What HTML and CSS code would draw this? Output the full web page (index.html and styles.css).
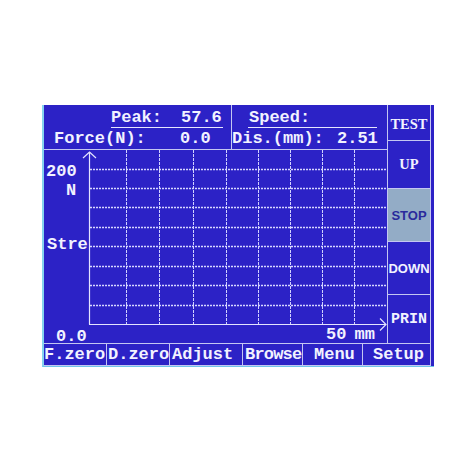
FILE: index.html
```
<!DOCTYPE html>
<html>
<head>
<meta charset="utf-8">
<link rel="stylesheet" href="styles.css">
</head>
<body>
<div class="screen">
  <div class="top">
    <div class="main">
      <div class="header">
        <div class="hcell hl">
          <div class="line1 pad-peak"><span class="ul ul-peak"><span class="k-peak">Peak:</span><span>57.6</span></span></div>
          <div class="line2 pad-force"><span class="k-force">Force(N):</span><span>0.0</span></div>
        </div>
        <div class="hcell hr">
          <div class="line1 pad-speed"><span class="ul ul-speed">Speed:</span></div>
          <div class="line2 pad-dis"><span class="k-dis">Dis.(mm):</span><span>2.51</span></div>
        </div>
      </div>
      <div class="graph">
        <div class="labels">
          <div class="lab l200">200</div>
          <div class="lab ln">N</div>
          <div class="lab lstre">Stre</div>
        </div>
        <div class="plot"><svg class="chart" width="298" height="174" viewBox="0 0 298 174"><g class="vgrid"><line x1="37.5" y1="0" x2="37.5" y2="174"/><line x1="70.5" y1="0" x2="70.5" y2="174"/><line x1="104.5" y1="0" x2="104.5" y2="174"/><line x1="137.5" y1="0" x2="137.5" y2="174"/><line x1="169.5" y1="0" x2="169.5" y2="174"/><line x1="201.5" y1="0" x2="201.5" y2="174"/><line x1="233.5" y1="0" x2="233.5" y2="174"/><line x1="265.5" y1="0" x2="265.5" y2="174"/></g><g class="hgrid"><line x1="1" y1="19.5" x2="298" y2="19.5"/><line x1="1" y1="38.5" x2="298" y2="38.5"/><line x1="1" y1="57.5" x2="298" y2="57.5"/><line x1="1" y1="77.5" x2="298" y2="77.5"/><line x1="1" y1="96.5" x2="298" y2="96.5"/><line x1="1" y1="116.5" x2="298" y2="116.5"/><line x1="1" y1="135.5" x2="298" y2="135.5"/><line x1="1" y1="155.5" x2="298" y2="155.5"/></g><g class="axis"><line x1="0.5" y1="2" x2="0.5" y2="174.5"/><polyline points="-6,8 0.5,2 7,8"/><line x1="0" y1="174.5" x2="297" y2="174.5"/><polyline points="291,168.5 297,174.5 291,180.5"/></g></svg></div>
        <div class="lab l00">0.0</div>
        <div class="lab l50">50 mm</div>
      </div>
    </div>
    <div class="side">
      <div class="sc c-test serif">TEST</div>
      <div class="sc c-up serif">UP</div>
      <div class="sc c-stop sans">STOP</div>
      <div class="sc c-down sans">DOWN</div>
      <div class="sc c-prin">PRIN</div>
    </div>
  </div>
  <div class="bar">
    <div class="bc b1">F.zero</div>
    <div class="bc b2">D.zero</div>
    <div class="bc b3">Adjust</div>
    <div class="bc b4">Browse</div>
    <div class="bc b5">Menu</div>
    <div class="bc b6">Setup</div>
  </div>
</div>
</body>
</html>
```
FILE: styles.css
```
html, body {
  margin: 0;
  background: #ffffff;
}
body {
  padding: 105px 0 0 42px;
  width: 474px;
  height: 474px;
  box-sizing: border-box;
  overflow: hidden;
}
.screen {
  width: 392px;
  height: 262px;
  box-sizing: border-box;
  background: #2c22c6;
  border-left: 2px solid #86d4ee;
  border-bottom: 1px solid #70c4e8;
  padding-right: 3px;
  display: flex;
  flex-direction: column;
  color: #f2f2ff;
  font: bold 17px "Liberation Mono", "DejaVu Sans Mono", monospace;
  white-space: nowrap;
}
.top {
  display: flex;
  height: 238px;
}
.main {
  width: 343px;
  display: flex;
  flex-direction: column;
}
.header {
  display: flex;
  height: 45px;
  box-sizing: border-box;
  border-bottom: 1px solid #c4c6f2;
}
.hcell {
  display: flex;
  flex-direction: column;
}
.hl {
  width: 188px;
  box-sizing: border-box;
  border-right: 1px solid #c4c6f2;
}
.hr {
  flex: 1;
}
.line1 {
  height: 23px;
  display: flex;
}
.ul {
  display: flex;
  box-sizing: border-box;
  height: 23px;
  padding-top: 3px;
  line-height: 19px;
  border-bottom: 1px solid #e6e6ff;
}
.line2 {
  height: 21px;
  box-sizing: border-box;
  padding-top: 1px;
  line-height: 20px;
  display: flex;
}
.pad-peak { padding-left: 67px; }
.ul-peak { width: 112px; }
.k-peak { width: 70px; }
.pad-force { padding-left: 10px; }
.k-force { width: 126px; }
.pad-speed { padding-left: 16px; }
.ul-speed { width: 129px; padding-left: 1px; }
.pad-dis { padding-left: 0px; }
.k-dis { width: 105px; }

.graph {
  display: grid;
  grid-template-columns: 45px 298px;
  grid-template-rows: 174px 19px;
}
.labels {
  display: flex;
  flex-direction: column;
}
.lab {
  line-height: 17px;
}
.l200 { margin-top: 13px; margin-left: 2px; }
.ln { margin-top: 2px; margin-left: 22px; }
.lstre { margin-top: 37px; margin-left: 3px; }
.l00 { margin-top: 6px; margin-left: 12px; line-height: 13px; }
.l50 { margin-top: 4px; margin-left: 237px; line-height: 13px; word-spacing: -2px; }
.plot {
  height: 174px;
}
.chart {
  display: block;
  overflow: visible;
}
.vgrid line {
  stroke: #d2d2ff;
  stroke-width: 1;
  stroke-dasharray: 3 1;
}
.hgrid line {
  stroke: #d6d6ff;
  stroke-width: 1.4;
  stroke-dasharray: 2 1;
}
.axis line, .axis polyline {
  stroke: #e4e4ff;
  stroke-width: 1.2;
  fill: none;
}

.side {
  width: 44px;
  box-sizing: border-box;
  border-left: 1px solid #c4c6f2;
  border-right: 1px solid #c4c6f2;
  display: flex;
  flex-direction: column;
}
.sc {
  display: flex;
  align-items: center;
  justify-content: center;
  box-sizing: border-box;
  border-top: 1px solid #c4c6f2;
  font-size: 15px;
}
.c-test { height: 35px; border-top: none; padding-top: 3px; }
.c-up { height: 48px; }
.c-stop { height: 53px; background: #93acc6; color: #2a2a9c; }
.c-down { height: 53px; }
.c-prin { height: 49px; }
.serif {
  font-family: "Liberation Serif", serif;
  font-size: 14.5px;
}
.sans {
  font-family: "Liberation Sans", sans-serif;
  font-size: 13px;
}

.bar {
  display: flex;
  height: 23px;
  box-sizing: border-box;
  border-top: 1px solid #c4c6f2;
  border-bottom: 1px solid #c4c6f2;
  line-height: 21px;
}
.bc {
  box-sizing: border-box;
  border-right: 1px solid #c4c6f2;
}
.b1 { width: 63px; padding-left: 0px; }
.b2 { width: 63px; padding-left: 1px; }
.b3 { width: 73px; padding-left: 2px; }
.b4 { width: 60px; padding-left: 2px; letter-spacing: -0.8px; }
.b5 { width: 60px; padding-left: 11px; }
.b6 { width: 68px; padding-left: 10px; }
```
